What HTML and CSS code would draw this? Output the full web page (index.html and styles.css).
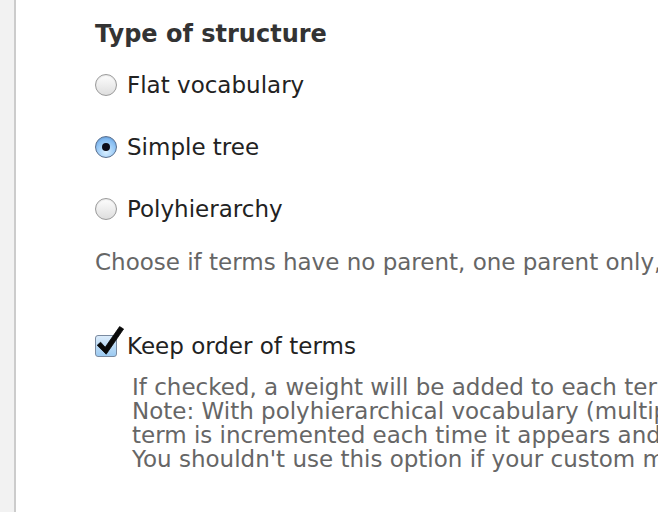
FILE: index.html
```html
<!DOCTYPE html>
<html>
<head>
<meta charset="utf-8">
<link rel="stylesheet" href="styles.css">
</head>
<body>
<div class="page">
  <div class="sidebar"></div>
  <div class="content">
    <div class="title">Type of structure</div>
    <div class="option">
      <span class="radio"></span><span class="label">Flat vocabulary</span>
    </div>
    <div class="option">
      <span class="radio checked"><span class="dot"></span></span><span class="label">Simple tree</span>
    </div>
    <div class="option">
      <span class="radio"></span><span class="label">Polyhierarchy</span>
    </div>
    <div class="help">Choose if terms have no parent, one parent only, or multiple parents.</div>
    <div class="option check-row">
      <span class="checkbox"><svg viewBox="0 0 30 32" width="30" height="32"><path d="M2.2 20.3 L5.6 17.2 L10.2 22.3 L24.6 1.6 L28.6 4 L11.2 29.2 Z" fill="#0a0a0a" stroke="#0a0a0a" stroke-width="0.8" stroke-linejoin="round"/></svg></span><span class="label">Keep order of terms</span>
    </div>
    <div class="desc">
      <div>If checked, a weight will be added to each term to preserve the order.</div>
      <div>Note: With polyhierarchical vocabulary (multiple parents), the weight of a</div>
      <div>term is incremented each time it appears and the order is preserved.</div>
      <div>You shouldn't use this option if your custom module manages weights.</div>
    </div>
  </div>
</div>
</body>
</html>
```
FILE: styles.css
```css
html, body {
  margin: 0;
  padding: 0;
  background: #fff;
  overflow: hidden;
}
.page {
  display: flex;
  height: 512px;
  overflow: hidden;
  font-family: "DejaVu Sans", sans-serif;
}
.sidebar {
  width: 14px;
  flex: none;
  background: #f2f2f2;
  border-right: 2px solid #cccccc;
}
.content {
  padding: 18px 0 0 79px;
  white-space: nowrap;
  flex: 1;
  min-width: 0;
  overflow: hidden;
}
.title {
  font-size: 24px;
  font-weight: bold;
  color: #333;
  line-height: 32px;
  padding-bottom: 4px;
}
.option {
  display: flex;
  align-items: center;
  height: 62px;
}
.radio {
  width: 20px;
  height: 20px;
  border-radius: 50%;
  border: 1px solid #9a9a9a;
  background: linear-gradient(#fdfdfd, #dedede);
  box-shadow: inset 0 1px 1px rgba(0,0,0,0.08);
  display: flex;
  align-items: center;
  justify-content: center;
  flex: none;
}
.radio.checked {
  border-color: #5a6f8e;
  background: radial-gradient(circle at 50% 75%, #d9efff 0%, #9fcdf7 45%, #5fa2e8 100%);
}
.dot {
  width: 8px;
  height: 8px;
  border-radius: 50%;
  background: #0d0d1a;
}
.label {
  margin-left: 10px;
  font-size: 23px;
  color: #222;
}
.help {
  font-size: 23px;
  color: #666;
  line-height: 24px;
  margin-top: 10px;
}
.check-row {
  margin-top: 47px;
  height: 50px;
}
.checkbox {
  width: 20px;
  height: 20px;
  border: 1px solid #7a8aa0;
  border-radius: 3px;
  background: linear-gradient(#dcecfb, #9ccaf1);
  position: relative;
  flex: none;
}
.checkbox svg {
  position: absolute;
  left: -1px;
  top: -11px;
  overflow: visible;
}
.desc {
  margin-top: 4px;
  padding-left: 37px;
  font-size: 23px;
  color: #666;
  line-height: 24px;
}
```
